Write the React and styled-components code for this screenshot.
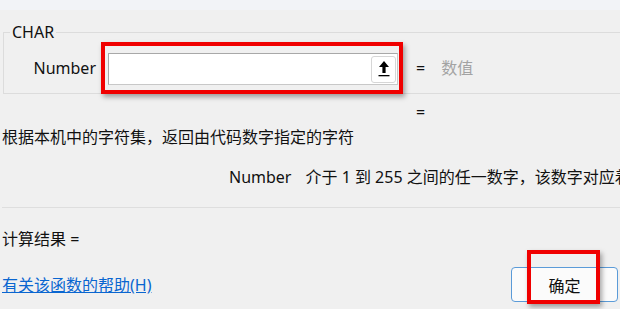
import React from 'react'
import styled, { createGlobalStyle } from 'styled-components'

const GlobalStyle = createGlobalStyle`
    html, body {
        margin: 0;
        padding: 0;
        background: #f0f0f0;
    }
    body {
        font-family: "Noto Sans", "Noto Sans CJK SC", sans-serif;
        font-size: 16px;
        color: #111;
    }
`

const Page = styled.div`
    width: 620px;
    height: 309px;
    overflow: hidden;
    background: #f0f0f0;
`
const TopStrip = styled.div`
    height: 10px;
    background: #f2f3f7;
`

// argument group box
const Group = styled.div`
    position: relative;
    margin: 22px 0 0 3px;
    height: 60px;
    border: 1px solid #dcdcdc;
    border-right: none;
`
const GroupTitle = styled.span`
    position: absolute;
    left: 6px;
    top: -11px;
    padding: 0 2px;
    line-height: 20px;
    background: #f0f0f0;
`
const ArgRow = styled.div`
    display: flex;
    align-items: center;
    padding-top: 9px;
`
const ArgLabel = styled.div`
    width: 92px;
    text-align: right;
    margin-right: 5px;
    line-height: 20px;
`
const Highlight = styled.div`
    border: 4px solid #f00000;
    box-shadow: 2px 3px 5px rgba(0, 0, 0, 0.35);
    padding: 7px 1px 5px 3px;
    box-sizing: border-box;
    height: 52px;
`
const InputBox = styled.div`
    display: flex;
    align-items: center;
    width: 290px;
    height: 32px;
    box-sizing: border-box;
    background: #fff;
    border: 1px solid #a8a8a8;
    border-bottom-color: #c8c8c8;
    border-right-color: #c8c8c8;
`
const InputField = styled.div`
    flex: 1;
`
const PickButton = styled.div`
    width: 25px;
    height: 27px;
    box-sizing: border-box;
    margin-right: 1px;
    border: 1px solid #d6d6d6;
    border-radius: 3px;
    background: #fff;
    display: flex;
    align-items: center;
    justify-content: center;
`
const Equals = styled.span`
    margin-left: ${p => p.$offset || 0}px;
    line-height: 20px;
`
const Value = styled.span`
    margin-left: 16px;
    color: #a3a3a3;
    line-height: 20px;
`
const EqualsRow = styled.div`
    margin-top: 8px;
    padding-left: 416px;
    height: 20px;
    display: flex;
    align-items: center;
`
const TextLine = styled.div`
    margin-top: ${p => p.$top}px;
    padding-left: ${p => p.$left || 2}px;
    line-height: 20px;
    white-space: nowrap;
    overflow: hidden;
`
const ParamName = styled.span`
    margin-right: 14px;
`
const Separator = styled.div`
    margin: 20px 0 0 2px;
    height: 1px;
    background: #dedede;
`
const Footer = styled.div`
    margin-top: 18px;
    display: flex;
    align-items: center;
    justify-content: space-between;
    padding: 0 2px;
`
const HelpLink = styled.a`
    color: #0a66d0;
    text-decoration: underline;
    line-height: 20px;
    margin-top: 1px;
    cursor: pointer;
`
const OkButton = styled.div`
    position: relative;
    width: 107px;
    height: 35px;
    box-sizing: border-box;
    border: 1px solid #5b9bd8;
    border-radius: 4px;
    background: #fbfbfb;
    display: flex;
    align-items: center;
    justify-content: center;
`
const ButtonMark = styled.div`
    position: absolute;
    left: 15px;
    top: -18px;
    width: 73px;
    height: 54px;
    box-sizing: border-box;
    border: 4px solid #f00000;
    box-shadow: 2px 3px 5px rgba(0, 0, 0, 0.35);
`

const UploadIcon = () => (
    <svg width="12" height="18" viewBox="0 0 12 18">
        <path d="M6 1 L11 7 L7.6 7 L7.6 13 L4.4 13 L4.4 7 L1 7 Z" fill="#000" />
        <rect x="0.5" y="15" width="11" height="1.3" fill="#000" />
    </svg>
)

const App = () => {
    return (
        <Page>
            <GlobalStyle />
            <TopStrip />
            <Group>
                <GroupTitle>CHAR</GroupTitle>
                <ArgRow>
                    <ArgLabel>Number</ArgLabel>
                    <Highlight>
                        <InputBox>
                            <InputField />
                            <PickButton>
                                <UploadIcon />
                            </PickButton>
                        </InputBox>
                    </Highlight>
                    <Equals $offset={13}>=</Equals>
                    <Value>数值</Value>
                </ArgRow>
            </Group>
            <EqualsRow>
                <Equals>=</Equals>
            </EqualsRow>
            <TextLine $top={5}>根据本机中的字符集，返回由代码数字指定的字符</TextLine>
            <TextLine $top={20} $left={229}>
                <ParamName>Number</ParamName>
                介于 1 到 255 之间的任一数字，该数字对应着您的计算机所用字符集中的字符
            </TextLine>
            <Separator />
            <TextLine $top={21}>计算结果 =</TextLine>
            <Footer>
                <HelpLink>有关该函数的帮助(H)</HelpLink>
                <OkButton>
                    确定
                    <ButtonMark />
                </OkButton>
            </Footer>
        </Page>
    )
}

export default App
